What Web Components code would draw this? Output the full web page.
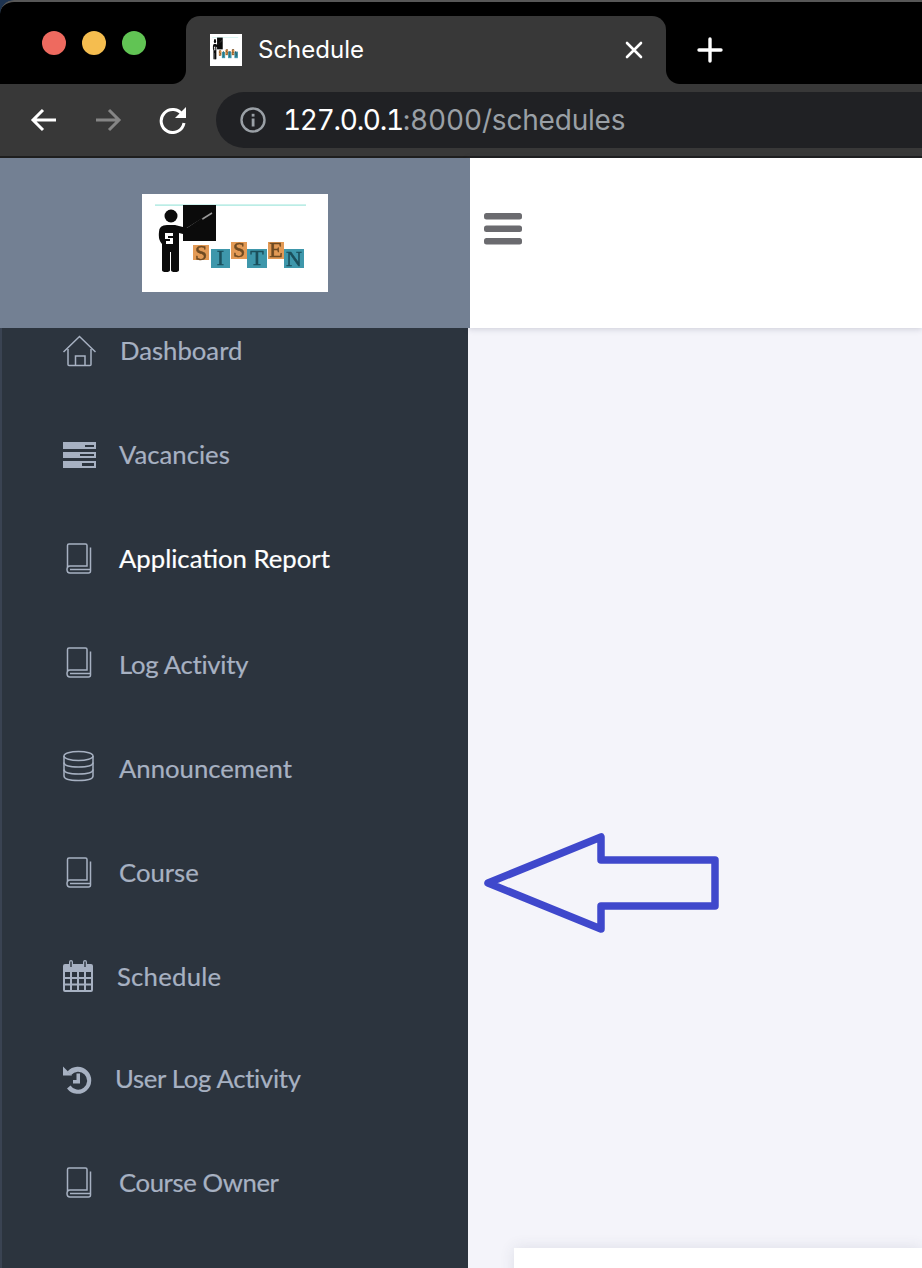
<!DOCTYPE html>
<html lang="en">
<head>
<meta charset="utf-8">
<title>Schedule</title>
<style>
html, body { margin: 0; height: 100%; background: #1d3350; overflow: hidden; }
</style>
</head>
<body>
<app-window>
  <browser-chrome slot="chrome" title-text="Schedule" host-part="127.0.0.1" path-part=":8000/schedules"></browser-chrome>
  <admin-layout>
    <sisten-logo slot="brand" style="width:186px;height:98px"></sisten-logo>
    <nav-item icon="home" gap="24" ty="-1">Dashboard</nav-item>
    <nav-item icon="server" gap="23" ty="-1">Vacancies</nav-item>
    <nav-item icon="book" gap="23" ty="-1" iy="-1" active>Application Report</nav-item>
    <nav-item icon="book" gap="23" ty="1" iy="-1" ls="-.27">Log Activity</nav-item>
    <nav-item icon="database" gap="23" ty="1" iy="-1">Announcement</nav-item>
    <nav-item icon="book" gap="23" ty="1" iy="1">Course</nav-item>
    <nav-item icon="calendar" gap="23" ty="1" iy="1" ls=".25">Schedule</nav-item>
    <nav-item icon="history" gap="23" ty="-1" iy="1" ls="-.3">User Log Activity</nav-item>
    <nav-item icon="book" gap="23" ty="-1" iy="-1" ls="-.4">Course Owner</nav-item>
  </admin-layout>
  <callout-arrow></callout-arrow>
</app-window>

<script>
const windowTemplate = document.createElement('template');
windowTemplate.innerHTML = `
<style>
:host {
  display: flex;
  flex-direction: column;
  position: relative;
  width: 922px;
  height: 1268px;
  overflow: hidden;
  border-radius: 14px 0 0 0;
  font-family: "Liberation Sans", sans-serif;
}
</style>
<slot name="chrome"></slot>
<slot></slot>
`;

class AppWindow extends HTMLElement {
  constructor() {
    super();
    this.attachShadow({mode: 'open'});
    this.shadowRoot.appendChild(windowTemplate.content.cloneNode(true));
  }
}

const chromeTemplate = document.createElement('template');
chromeTemplate.innerHTML = `
<style>
:host {
  display: block;
  height: 158px;
  flex: none;
  font-family: Inter, "Liberation Sans", sans-serif;
}
.strip {
  display: flex;
  align-items: flex-end;
  height: 82px;
  background: #000;
  border-top: 2px solid #575757;
  border-radius: 14px 0 0 0;
}
.lights {
  display: flex;
  gap: 16px;
  align-self: flex-start;
  padding: 29px 0 0 42px;
  width: 186px;
  box-sizing: border-box;
  flex: none;
}
.lights i { width: 24px; height: 24px; border-radius: 50%; }
.tab {
  position: relative;
  display: flex;
  align-items: center;
  width: 480px;
  height: 68px;
  padding: 0 24px;
  box-sizing: border-box;
  background: #383838;
  border-radius: 14px 14px 0 0;
  color: #fff;
  font-size: 24px;
  flex: none;
}
.tab::before, .tab::after {
  content: '';
  position: absolute;
  bottom: 0;
  width: 14px;
  height: 14px;
}
.tab::before {
  left: -14px;
  background: radial-gradient(circle at 0 0, #000 13.5px, #383838 14.5px);
}
.tab::after {
  right: -14px;
  background: radial-gradient(circle at 100% 0, #000 13.5px, #383838 14.5px);
}
.tab sisten-logo { width: 32px; height: 32px; margin-right: 16px; flex: none; }
.title { flex: 1; position: relative; top: -1px; }
.close { width: 18px; height: 18px; margin-right: -1px; }
.plus { width: 26px; height: 26px; margin: 0 0 21px 31px; flex: none; }
.bar {
  display: flex;
  align-items: center;
  height: 72px;
  background: #383838;
  border-bottom: 2px solid #1e1e1e;
}
.nav { display: flex; align-items: center; width: 216px; padding-left: 30px; box-sizing: border-box; gap: 36px; flex: none; }
.omni {
  display: flex;
  align-items: center;
  flex: 1;
  height: 56px;
  padding-left: 24px;
  gap: 17px;
  background: #202124;
  border-radius: 28px 0 0 28px;
  font-size: 28px;
  color: #fff;
  white-space: nowrap;
  font-variant-numeric: tabular-nums;
}
.url { letter-spacing: -1.3px; }
.url span { color: #9aa0a6; letter-spacing: -.2px; }
svg { display: block; flex: none; }
</style>
<div class="strip">
  <div class="lights">
    <i style="background:#ee6a5f"></i><i style="background:#f5bd4f"></i><i style="background:#61c454"></i>
  </div>
  <div class="tab">
    <sisten-logo></sisten-logo>
    <span class="title"></span>
    <svg class="close" viewBox="0 0 18 18"><path d="M2 2L16 16M16 2L2 16" stroke="#fff" stroke-width="2.6" stroke-linecap="round"/></svg>
  </div>
  <svg class="plus" viewBox="0 0 26 26"><path d="M13 2V24M2 13H24" stroke="#fff" stroke-width="3.4" stroke-linecap="round"/></svg>
</div>
<div class="bar">
  <div class="nav">
    <svg width="28" height="26" viewBox="0 0 28 26"><path d="M26 13H3M13 3L3 13L13 23" fill="none" stroke="#fff" stroke-width="3"/></svg>
    <svg width="28" height="26" viewBox="0 0 28 26"><path d="M2 13H25M15 3L25 13L15 23" fill="none" stroke="#858585" stroke-width="3"/></svg>
    <svg width="30" height="28" viewBox="0 0 30 28"><path d="M24.5 9A11.5 11.5 0 1 0 26 17" fill="none" stroke="#fff" stroke-width="3"/><path d="M28 1V12H17Z" fill="#fff"/></svg>
  </div>
  <div class="omni">
    <svg width="26" height="26" viewBox="0 0 26 26"><circle cx="13" cy="13" r="11.5" fill="none" stroke="#9aa0a6" stroke-width="2.4"/><rect x="11.7" y="11.5" width="2.8" height="8" fill="#9aa0a6"/><rect x="11.7" y="6.8" width="2.8" height="2.8" fill="#9aa0a6"/></svg>
    <span class="url"></span>
  </div>
</div>
`;

class BrowserChrome extends HTMLElement {
  constructor() {
    super();
    this.attachShadow({mode: 'open'});
    this.shadowRoot.appendChild(chromeTemplate.content.cloneNode(true));
    this.shadowRoot.querySelector('.title').textContent = this.getAttribute('title-text');
    const url = this.shadowRoot.querySelector('.url');
    url.textContent = this.getAttribute('host-part');
    const rest = document.createElement('span');
    rest.textContent = this.getAttribute('path-part');
    url.appendChild(rest);
  }
}

const logoTemplate = document.createElement('template');
logoTemplate.innerHTML = `
<style>
:host { display: block; background: #fff; overflow: hidden; }
svg { display: block; width: 100%; height: 100%; filter: blur(.6px); }
text { font-family: "Liberation Serif", serif; font-size: 22px; text-anchor: middle; stroke-width: .5px; }
.o { fill: #6e4a22; stroke: #6e4a22; }
.t { fill: #1b4f5c; stroke: #1b4f5c; }
</style>
<svg viewBox="0 0 186 98" preserveAspectRatio="none">
  <rect x="13" y="10.500" width="151" height="1.200" fill="#9fe6dc"/>
  <rect x="41" y="11" width="33" height="36" fill="#0b0b0b"/>
  <path d="M43 36L70 19" stroke="#999" stroke-width="1.500"/>
  <circle cx="29" cy="22" r="6.500" fill="#0b0b0b"/>
  <path d="M17 38Q17 31 25 31H33L45 34 60 24 61 27 45 41 37 39V76Q37 78 33 78 29 78 29 76V58H28V76Q28 78 24 78 20 78 20 76V50Q16 46 17 38Z" fill="#0b0b0b"/>
  <path d="M23 39H31V42H26V44H31V50H24V47H28V45H23Z" fill="#fff"/>
  <rect x="51" y="51" width="16" height="15" fill="#e39a55"/>
  <rect x="69" y="55" width="19" height="19" fill="#3e97ab"/>
  <rect x="89" y="48" width="16" height="17" fill="#e39a55"/>
  <rect x="105" y="55" width="20" height="19" fill="#3e97ab"/>
  <rect x="126" y="48" width="16" height="17" fill="#e39a55"/>
  <rect x="142" y="55" width="20" height="19" fill="#3e97ab"/>
  <text class="o" x="59" y="66">S</text>
  <text class="t" x="78.500" y="71">I</text>
  <text class="o" x="97" y="63">S</text>
  <text class="t" x="115" y="71">T</text>
  <text class="o" x="134" y="63">E</text>
  <text class="t" x="152" y="72">N</text>
</svg>
`;

class SistenLogo extends HTMLElement {
  constructor() {
    super();
    this.attachShadow({mode: 'open'});
    this.shadowRoot.appendChild(logoTemplate.content.cloneNode(true));
  }
}

const layoutTemplate = document.createElement('template');
layoutTemplate.innerHTML = `
<style>
:host {
  display: grid;
  grid-template-columns: 468px 1fr;
  grid-template-rows: 170px 1fr;
  flex: 1;
  min-height: 0;
  background: #f4f4fa;
}
.brand {
  display: flex;
  justify-content: center;
  padding-top: 36px;
  width: 470px;
  box-sizing: border-box;
  background: #738093;
  position: relative;
  z-index: 2;
}
.header {
  display: flex;
  padding: 55px 0 0 16px;
  background: #fff;
  box-shadow: 0 1px 6px rgba(60, 64, 90, .22);
  position: relative;
  z-index: 1;
}
.menu {
  background: #2c343e;
  border-left: 2px solid #3a4352;
  overflow: hidden;
}
.scroll { margin-top: -29px; }
.content {
  padding: 920px 0 0 46px;
  overflow: hidden;
}
.card {
  height: 400px;
  background: #fff;
  box-shadow: 0 0 14px rgba(60, 64, 90, .12);
}
svg { display: block; }
</style>
<div class="brand"><slot name="brand"></slot></div>
<div class="header">
  <svg width="38" height="32" viewBox="0 0 38 32"><g fill="#6b6b6f"><rect width="38" height="6.500" rx="2.500"/><rect y="12.500" width="38" height="6.500" rx="2.500"/><rect y="25" width="38" height="6.500" rx="2.500"/></g></svg>
</div>
<div class="menu"><div class="scroll"><slot></slot></div></div>
<div class="content"><div class="card"></div></div>
`;

class AdminLayout extends HTMLElement {
  constructor() {
    super();
    this.attachShadow({mode: 'open'});
    this.shadowRoot.appendChild(layoutTemplate.content.cloneNode(true));
  }
}

const icons = {
  home: `<svg width="34" height="32" viewBox="0 0 34 32" fill="none" stroke="currentColor" stroke-width="1.500"><path d="M1.500 17L17.500 1.500 33.500 17"/><path d="M6 14V29.500Q6 30.500 7 30.500H28Q29 30.500 29 29.500V14"/><path d="M13.500 30.500V21H23V30.500"/></svg>`,
  server: `<svg width="34" height="27" viewBox="0 0 34 27" fill="currentColor" fill-rule="evenodd"><path d="M1 0H34V7H1ZM23 3V5H32V3Z"/><path d="M1 10H34V16H1ZM18 12V14H32V12Z"/><path d="M1 19H34V26H1ZM20 21V24H32V21Z"/></svg>`,
  book: `<svg width="34" height="32" viewBox="0 0 34 32" fill="none" stroke="currentColor" stroke-width="1.500"><path d="M5.500 26V3.500Q5.500 2 7 2H23.500Q25 2 25 3.500V24H8Q5 24 5 27.500T8 31H26.500Q28.500 31 28.500 29V5.500"/><path d="M8 27.500H28"/></svg>`,
  database: `<svg width="34" height="32" viewBox="0 0 34 32" fill="none" stroke="currentColor" stroke-width="1.500"><ellipse cx="16.500" cy="6" rx="14.500" ry="4.500"/><path d="M2 6V26Q2 30.500 16.500 30.500T31 26V6"/><path d="M2 12.500Q2 17 16.500 17T31 12.500"/><path d="M2 19.500Q2 24 16.500 24T31 19.500"/></svg>`,
  calendar: `<svg width="32" height="33" viewBox="0 0 32 33" fill="currentColor" fill-rule="evenodd"><path d="M3 4H7V2Q7 0 9 0T11 2V4H21V2Q21 0 23 0T25 2V4H29Q31 4 31 6V30Q31 32 29 32H3Q1 32 1 30V6Q1 4 3 4ZM3 12V17H8V12ZM10 12V17H15V12ZM17 12V17H22V12ZM24 12V17H29V12ZM3 19V23.500H8V19ZM10 19V23.500H15V19ZM17 19V23.500H22V19ZM24 19V23.500H29V19ZM3 25.500V30H8V25.500ZM10 25.500V30H15V25.500ZM17 25.500V30H22V25.500ZM24 25.500V30H29V25.500ZM8.300 1.500V7H9.700V1.500ZM22.300 1.500V7H23.700V1.500Z"/></svg>`,
  history: `<svg width="30" height="30" viewBox="0 0 30 30" fill="currentColor"><path d="M1 1.500L10 10.500H1Z"/><path d="M5.500 6.500A13.500 13.500 0 1 1 5 23.500L8.500 20.500A9 9 0 1 0 9.200 10Z"/><path d="M14.500 8.500H18V18.500H11V15H14.500Z"/></svg>`
};

const itemTemplate = document.createElement('template');
itemTemplate.innerHTML = `
<style>
:host {
  display: flex;
  align-items: center;
  height: 104px;
  padding-left: 60px;
  color: #a7b1c2;
  font-family: Lato, "Noto Sans", sans-serif;
  font-size: 25.7px;
  -webkit-text-stroke: .2px;
  white-space: nowrap;
}
:host([active]) { color: #fff; }
.icon { display: block; color: #a7b1c2; flex: none; }
svg { display: block; }
</style>
<span class="icon"></span>
<span class="label"><slot></slot></span>
`;

class NavItem extends HTMLElement {
  constructor() {
    super();
    this.attachShadow({mode: 'open'});
    this.shadowRoot.appendChild(itemTemplate.content.cloneNode(true));
    const icon = this.shadowRoot.querySelector('.icon');
    const label = this.shadowRoot.querySelector('.label');
    icon.innerHTML = icons[this.getAttribute('icon')];
    // centred rows, so a top margin moves the box by half of it
    icon.style.marginTop = 2 * (this.getAttribute('iy') || 0) + 'px';
    label.style.marginTop = 2 * (this.getAttribute('ty') || 0) + 'px';
    label.style.marginLeft = this.getAttribute('gap') + 'px';
    label.style.letterSpacing = (this.getAttribute('ls') || 0) + 'px';
  }
}

const arrowTemplate = document.createElement('template');
arrowTemplate.innerHTML = `
<style>
:host { position: absolute; left: 0; top: 0; z-index: 5; pointer-events: none; }
svg { display: block; }
</style>
<svg width="922" height="1268" viewBox="0 0 922 1268"><path d="M488 883L601 837V860H715V906H601V929Z" fill="none" stroke="#3f48cc" stroke-width="7.500" stroke-linejoin="round"/></svg>
`;

class CalloutArrow extends HTMLElement {
  constructor() {
    super();
    this.attachShadow({mode: 'open'});
    this.shadowRoot.appendChild(arrowTemplate.content.cloneNode(true));
  }
}

customElements.define('sisten-logo', SistenLogo);
customElements.define('browser-chrome', BrowserChrome);
customElements.define('admin-layout', AdminLayout);
customElements.define('nav-item', NavItem);
customElements.define('callout-arrow', CalloutArrow);
customElements.define('app-window', AppWindow);
</script>
</body>
</html>
